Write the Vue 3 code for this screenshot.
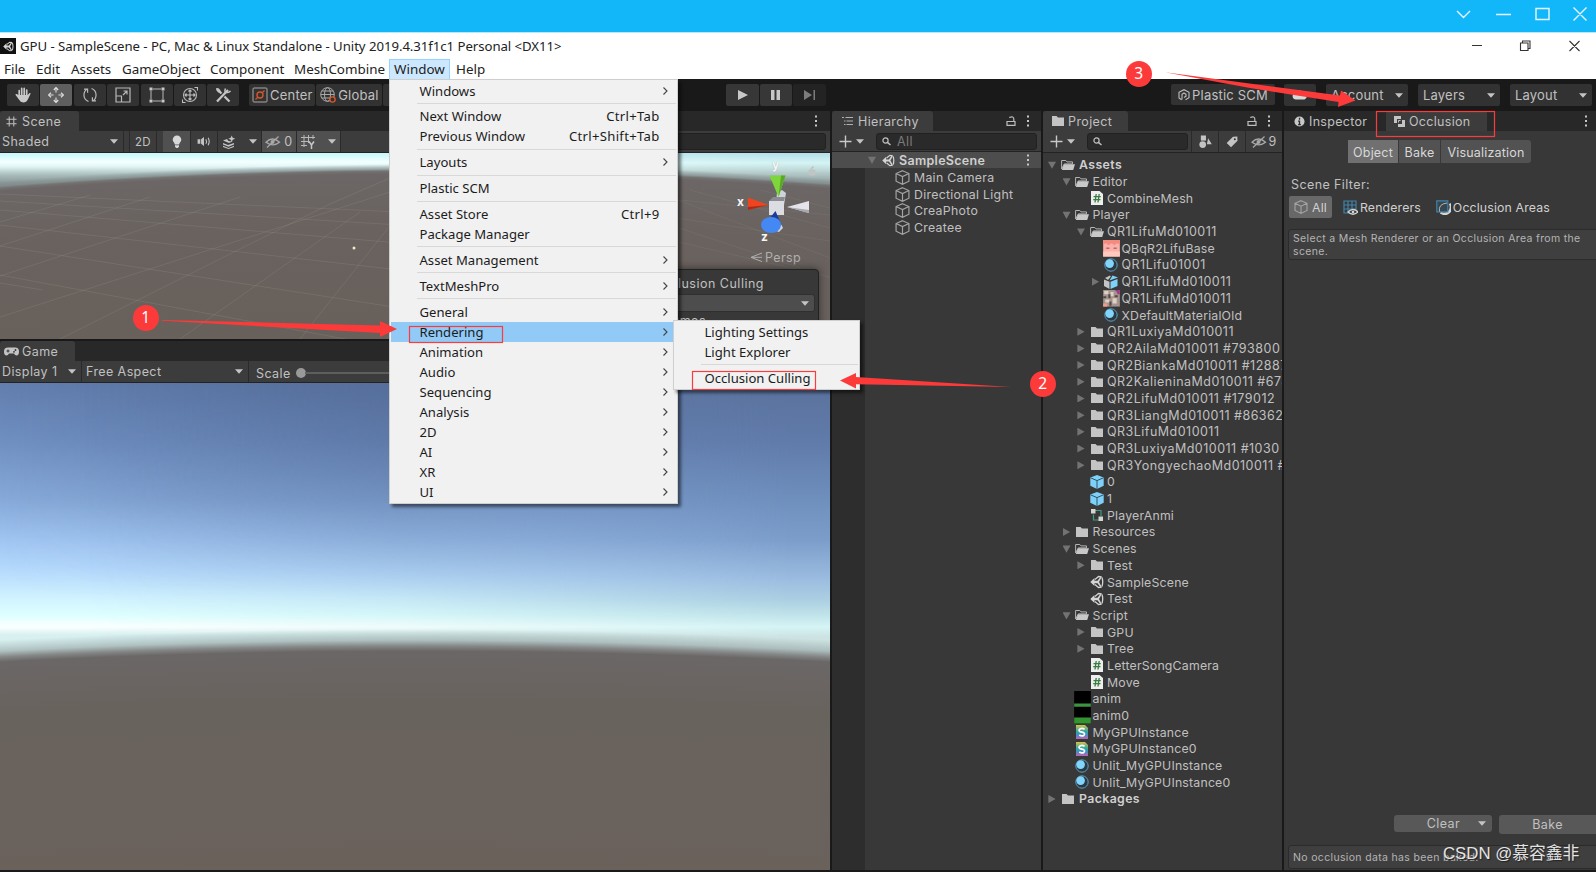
<script setup>
import { ref } from "vue";

const menus = ["File", "Edit", "Assets", "GameObject", "Component", "MeshCombine", "Window", "Help"];
const activeMenu = ref("Window");

const tools = ["hand", "move", "rotate", "scale", "rect", "transform", "custom"];
const activeTool = ref("move");

// "-" is a separator line
const windowMenu = [
  { text: "Windows", sub: true },
  "-",
  { text: "Next Window", key: "Ctrl+Tab" },
  { text: "Previous Window", key: "Ctrl+Shift+Tab" },
  "-",
  { text: "Layouts", sub: true },
  "-",
  { text: "Plastic SCM" },
  "-",
  { text: "Asset Store", key: "Ctrl+9" },
  { text: "Package Manager" },
  "-",
  { text: "Asset Management", sub: true },
  "-",
  { text: "TextMeshPro", sub: true },
  "-",
  { text: "General", sub: true },
  { text: "Rendering", sub: true, on: true },
  { text: "Animation", sub: true },
  { text: "Audio", sub: true },
  { text: "Sequencing", sub: true },
  { text: "Analysis", sub: true },
  { text: "2D", sub: true },
  { text: "AI", sub: true },
  { text: "XR", sub: true },
  { text: "UI", sub: true },
];

const renderingMenu = [{ text: "Lighting Settings" }, { text: "Light Explorer" }, "-", { text: "Occlusion Culling" }];

const objects = ["Main Camera", "Directional Light", "CreaPhoto", "Createe"];

// code: names with long model numbers
const assets = [
  { d: 0, arrow: "down", icon: "open", text: "Assets", bold: true },
  { d: 1, arrow: "down", icon: "open", text: "Editor" },
  { d: 2, icon: "script", text: "CombineMesh" },
  { d: 1, arrow: "down", icon: "open", text: "Player" },
  { d: 2, arrow: "down", icon: "open", text: "QR1LifuMd010011", code: true },
  { d: 3, icon: "face", text: "QBqR2LifuBase" },
  { d: 3, icon: "material", text: "QR1Lifu01001", code: true },
  { d: 3, arrow: "right", icon: "model", text: "QR1LifuMd010011", code: true },
  { d: 3, icon: "texture", text: "QR1LifuMd010011", code: true },
  { d: 3, icon: "material", text: "XDefaultMaterialOld" },
  { d: 2, arrow: "right", icon: "folder", text: "QR1LuxiyaMd010011", code: true },
  { d: 2, arrow: "right", icon: "folder", text: "QR2AilaMd010011 #793800", code: true },
  { d: 2, arrow: "right", icon: "folder", text: "QR2BiankaMd010011 #12887", code: true },
  { d: 2, arrow: "right", icon: "folder", text: "QR2KalieninaMd010011 #678", code: true },
  { d: 2, arrow: "right", icon: "folder", text: "QR2LifuMd010011 #179012", code: true },
  { d: 2, arrow: "right", icon: "folder", text: "QR3LiangMd010011 #86362", code: true },
  { d: 2, arrow: "right", icon: "folder", text: "QR3LifuMd010011", code: true },
  { d: 2, arrow: "right", icon: "folder", text: "QR3LuxiyaMd010011 #1030", code: true },
  { d: 2, arrow: "right", icon: "folder", text: "QR3YongyechaoMd010011 #", code: true },
  { d: 2, icon: "prefab", text: "0" },
  { d: 2, icon: "prefab", text: "1" },
  { d: 2, icon: "animator", text: "PlayerAnmi" },
  { d: 1, arrow: "right", icon: "folder", text: "Resources" },
  { d: 1, arrow: "down", icon: "open", text: "Scenes" },
  { d: 2, arrow: "right", icon: "folder", text: "Test" },
  { d: 2, icon: "unity", text: "SampleScene" },
  { d: 2, icon: "unity", text: "Test" },
  { d: 1, arrow: "down", icon: "open", text: "Script" },
  { d: 2, arrow: "right", icon: "folder", text: "GPU" },
  { d: 2, arrow: "right", icon: "folder", text: "Tree" },
  { d: 2, icon: "script", text: "LetterSongCamera" },
  { d: 2, icon: "script", text: "Move" },
  { d: 1, icon: "anim", text: "anim" },
  { d: 1, icon: "anim0", text: "anim0" },
  { d: 1, icon: "shader", text: "MyGPUInstance" },
  { d: 1, icon: "shader", text: "MyGPUInstance0" },
  { d: 1, icon: "material", text: "Unlit_MyGPUInstance" },
  { d: 1, icon: "material", text: "Unlit_MyGPUInstance0" },
  { d: 0, arrow: "right", icon: "folder", text: "Packages", bold: true },
];
</script>

<template>
  <!-- icon set -->
  <svg class="defs" width="0" height="0">
    <linearGradient id="g-shader" x1="0" y1="0" x2="0" y2="1">
      <stop offset="0" stop-color="#d8c24a" />
      <stop offset="0.45" stop-color="#2fa9a0" />
      <stop offset="0.7" stop-color="#3f8fc4" />
      <stop offset="1" stop-color="#c85fb0" />
    </linearGradient>
    <symbol id="i-hand" viewBox="0 0 16 16">
      <path d="M4.2 9.5V3.6M6.7 8V1.4M9.2 8V1.4M11.7 9V3" stroke="#c8c8c8" stroke-width="1.7" stroke-linecap="round" />
      <path d="M3.4 8h9.2l2-2q1.2-.2 1 .8l-2.800 5.700q-1.200 2.900-4.500 2.900-3 0-4.200-2.600L.4 7.800q.1-1.200 1.300-.7z" fill="#c8c8c8" />
    </symbol>
    <symbol id="i-move" viewBox="0 0 16 16">
      <path d="M8 1v4.500M8 10.500V15M1 8h4.500M10.500 8H15" stroke="#dedede" fill="none" stroke-width="1.1" />
      <path d="M5.800 3L8 .5 10.200 3M5.800 13L8 15.500 10.200 13M3 5.800L.5 8 3 10.200M13 5.800L15.500 8 13 10.200" stroke="#dedede" fill="none" stroke-width="1.200" />
    </symbol>
    <symbol id="i-rotate" viewBox="0 0 16 16">
      <path d="M6.500 14.500C1 12.500.5 5.500 5 2M9.500 1.500c5.500 2 6 9 1.500 12.500M2 2.200h3.600v3.600M14 13.800h-3.600v-3.600" stroke="#b8b8b8" fill="none" stroke-width="1.200" />
    </symbol>
    <symbol id="i-scale" viewBox="0 0 16 16">
      <path d="M1 1h14v14H1zM1 9h5.500v6M8 8l4-4M8.500 4H12v3.500" stroke="#b8b8b8" fill="none" stroke-width="1.200" />
    </symbol>
    <symbol id="i-rect" viewBox="0 0 16 16">
      <path d="M4 2h8M4 14h8M2 4v8M14 4v8" stroke="#b8b8b8" stroke-width="1" />
      <path d="M.5.500h3v3h-3zM12.500.500h3v3h-3zM.5 12.500h3v3h-3zM12.500 12.500h3v3h-3z" fill="#c8c8c8" />
    </symbol>
    <symbol id="i-transform" viewBox="0 0 16 16">
      <circle cx="8" cy="8" r="6.500" fill="none" stroke="#b8b8b8" stroke-width="1.100" />
      <path d="M8 3v10M3 8h10M6.500 4.500L8 3l1.500 1.500M6.500 11.500L8 13l1.500-1.500M4.500 6.500L3 8l1.500 1.500M11.500 6.500L13 8l-1.500 1.500M12.500.500h3v3M3.500 15.500h-3v-3" stroke="#c0c0c0" fill="none" stroke-width="1.100" />
    </symbol>
    <symbol id="i-custom" viewBox="0 0 16 16">
      <path d="M2 14.500L13 3M9.500 9.500l5 5M2 2l4.500 4.500" stroke="#c4c4c4" stroke-width="2.300" fill="none" />
      <path d="M10.500 1.500q-1.500 3.500 1 4t4-1.500" stroke="#c4c4c4" stroke-width="1.500" fill="none" />
      <path d="M1 1l3 .6L6 4.500 4 6 1.800 4z" fill="#c4c4c4" />
    </symbol>
    <symbol id="i-center" viewBox="0 0 16 16">
      <rect x="1" y="1" width="14" height="14" rx="1" fill="none" stroke="#a8a8a8" />
      <circle cx="8" cy="8" r="3" fill="none" stroke="#d4572c" stroke-width="1.400" />
      <path d="M3.500 12.500l2-2M10.500 5.500l2-2" stroke="#d4572c" stroke-width="1.200" />
    </symbol>
    <symbol id="i-global" viewBox="0 0 16 16">
      <g fill="none" stroke="#a8a8a8">
        <circle cx="7.500" cy="7.500" r="6.800" />
        <ellipse cx="7.500" cy="7.500" rx="3" ry="6.800" />
        <path d="M.7 7.500h13.600M1.800 4h11.400M1.800 11h11.400" />
      </g>
      <circle cx="12.500" cy="12.500" r="2.600" fill="#323232" stroke="#d4572c" stroke-width="1.400" />
    </symbol>
    <symbol id="i-hash" viewBox="0 0 12 12">
      <path d="M3.500.500v11M8.500.500v11M.5 3.500h11M.5 8.500h11" stroke="#c0c0c0" stroke-width="1.100" />
    </symbol>
    <symbol id="i-bulb" viewBox="0 0 12 14">
      <path d="M6 .5a4.300 4.300 0 0 1 4.300 4.300c0 2-1.800 2.700-2.100 4.600H3.800C3.500 7.500 1.700 6.800 1.700 4.800A4.300 4.300 0 0 1 6 .5zM4 10.300h4v1.500L6.800 13H5.200L4 11.800z" fill="#d8d8d8" />
    </symbol>
    <symbol id="i-sound" viewBox="0 0 14 12">
      <path d="M0 3.500h3v5H0zM3.800 3.500L7 1v10L3.800 8.500z" fill="#c4c4c4" />
      <path d="M9 3.500q1.500 2.500 0 5M11.500 2q2.300 4 0 8" stroke="#c4c4c4" fill="none" stroke-width="1.200" />
    </symbol>
    <symbol id="i-fx" viewBox="0 0 14 14">
      <path d="M1 5.500l4-1.500 1.500 2 4 .5L7 8zM1 8l5 2 6-2v1.500L6.500 11.800 1 9.500zM1 10.800l5.500 2.200 5.500-2.300V12l-5.500 2L1 12z" fill="#c4c4c4" />
      <path d="M9.700.500l1 2.300 2.600 1-2.600 1-1 2.400-1-2.400-2.500-1 2.500-1z" fill="#c4c4c4" />
    </symbol>
    <symbol id="i-eye" viewBox="0 0 16 12">
      <path d="M1 6.300q6.500-6.500 13.500 0Q8 11.500 1 6.300z" fill="none" stroke="#a8a8a8" stroke-width="1.300" />
      <circle cx="7.500" cy="6" r="2" fill="#a8a8a8" />
      <path d="M2 11.500L13.500.500" stroke="#a8a8a8" stroke-width="1.200" />
    </symbol>
    <symbol id="i-grid" viewBox="0 0 14 14">
      <path d="M3 0v12M7.500 0v8M12 0v4M0 2.500h14M0 6.500h7M0 10.500h6" stroke="#b8b8b8" />
      <path d="M8 6.500l2.500 3.500L13 6.500M10.500 10v4" stroke="#c8c8c8" stroke-width="1.500" fill="none" />
    </symbol>
    <symbol id="i-pad" viewBox="0 0 15 9">
      <path d="M4 .5h7q4 0 4 4t-2.500 4q-1.500 0-2.500-2H5q-1 2-2.500 2Q0 8.500 0 4.500t4-4z" fill="#c4c4c4" />
      <path d="M2.500 4h3M4 2.500v3" stroke="#333" />
      <circle cx="11.500" cy="3" r=".9" fill="#333" />
      <circle cx="10" cy="4.800" r=".9" fill="#333" />
    </symbol>
    <symbol id="i-list" viewBox="0 0 11 10">
      <path d="M0 1.500h2M3.500 1.500H11M2 5h1.500M4.500 5H11M2 8.500h1.500M4.500 8.500H11" stroke="#b0b0b0" />
    </symbol>
    <symbol id="i-lock" viewBox="0 0 10 10">
      <path d="M1 5.500h8v3.800H1zM3.200 1.500Q7.800-.2 7.800 3v2.500" fill="none" stroke="#bcbcbc" stroke-width="1.200" />
    </symbol>
    <symbol id="i-kebab" viewBox="0 0 4 12">
      <path d="M1 .6h2v2H1zM1 5h2v2H1zM1 9.400h2v2H1z" fill="#c8c8c8" />
    </symbol>
    <symbol id="i-plus" viewBox="0 0 13 13">
      <path d="M6.500.500v12M.5 6.500h12" stroke="#c8c8c8" stroke-width="1.400" />
    </symbol>
    <symbol id="i-caret" viewBox="0 0 8 5">
      <path d="M0 .2h8L4 4.800z" fill="#c4c4c4" />
    </symbol>
    <symbol id="i-search" viewBox="0 0 9 9">
      <circle cx="3.500" cy="3.500" r="2.600" fill="none" stroke="#c0c0c0" stroke-width="1.200" />
      <path d="M5.400 5.400L8.500 8" stroke="#c0c0c0" stroke-width="1.400" />
    </symbol>
    <symbol id="i-shapes" viewBox="0 0 14 14">
      <path d="M2 0h5.500v5.500H2z" fill="#c4c4c4" />
      <circle cx="4" cy="9.800" r="3.600" fill="#c4c4c4" />
      <path d="M8.500 9.500L9.800 3l4 6.500z" fill="#c4c4c4" />
    </symbol>
    <symbol id="i-tag" viewBox="0 0 12 12">
      <path d="M7 .8l4.300-.3.200 4.300L5 11.300.7 7z" fill="#c4c4c4" />
      <circle cx="8.800" cy="3.200" r="1" fill="#333" />
    </symbol>
    <symbol id="i-info" viewBox="0 0 12 12">
      <circle cx="6" cy="6" r="5.500" fill="#c8c8c8" />
      <path d="M6 2v2M6 5v4.500M4.500 5.500H6M4.500 9.300h3" stroke="#2a2a2a" stroke-width="1.400" />
    </symbol>
    <symbol id="i-occ" viewBox="0 0 11 11">
      <path d="M0 0h7v3H3v4H0z" fill="#c4c4c4" />
      <path d="M4 8h4V4h3v7H4z" fill="#c4c4c4" />
      <path d="M4.500 6.500v-2h2" stroke="#c4c4c4" fill="none" />
    </symbol>
    <symbol id="i-plastic" viewBox="0 0 12 12">
      <path d="M3.500 10.800L1 9V3.300L6 .7l5 2.600v5.500L7.500 10.800M4 10.500V5.200L6 4l2 1.200v2L6 8.500" fill="none" stroke="#c0c0c0" stroke-width="1.100" />
    </symbol>
    <symbol id="i-cloud" viewBox="0 0 16 10">
      <path d="M4 9.500a3.400 3.400 0 0 1 0-6.800A4.400 4.400 0 0 1 12 3.600a3 3 0 0 1 .5 5.900z" fill="#d8d8d8" />
    </symbol>
    <symbol id="i-cube" viewBox="0 0 14 14">
      <path d="M7 .7l6 2.600v7.200L7 13.400 1 10.500V3.300zM1 3.300l6 2.900 6-2.900M7 6.200v7.200" fill="none" stroke="#a4a4a4" stroke-width="1.100" />
    </symbol>
    <symbol id="i-unity" viewBox="0 0 14 14">
      <path d="M5 4.400L8.500 1.500l3.200.4M5 9.600l3.500 2.900 3.200-.4M12 2.500q1.400 4.500 0 9" fill="none" stroke="#d4d4d4" stroke-width="1.300" />
      <path d="M.3 7L4.500 3v2.800h3L10.300 2l1.200.6L9 7l2.500 4.400-1.200.6-2.800-3.800h-3V11z" fill="#d4d4d4" />
    </symbol>
    <symbol id="i-open" viewBox="0 0 14 12">
      <path d="M.6 10V1.500h4.200L6 2.900h5.500v2H3.300z" fill="#383838" stroke="#b4b4b4" stroke-width="1" />
      <path d="M3 5.300h11L12.200 11H.8z" fill="#c8c8c8" />
    </symbol>
    <symbol id="i-folder" viewBox="0 0 14 12">
      <path d="M1 1h4.500l1.500 1.500h6V11H1z" fill="#c4c4c4" />
    </symbol>
    <symbol id="i-script" viewBox="0 0 14 14">
      <path d="M1 0h8.500L13 3v11H1z" fill="#eeeeee" />
      <path d="M6.200 3L5 11.500M9.200 3L8 11.500M3.500 5.700h7.300M3.200 8.700h7.300" stroke="#3b7c42" stroke-width="1.300" />
    </symbol>
    <symbol id="i-material" viewBox="0 0 14 14">
      <circle cx="7" cy="7" r="6.200" fill="#2c3942" stroke="#5b9fc2" />
      <circle cx="5.600" cy="5.600" r="4.300" fill="#81d4fa" />
    </symbol>
    <symbol id="i-prefab" viewBox="0 0 14 14">
      <path d="M7 0l6.700 2.500v8.300L7 14 .3 10.800V2.500z" fill="#7ed0f8" />
      <path d="M.5 2.800L7 5.600l6.500-2.800M7 5.600V14" fill="none" stroke="#2f5468" />
    </symbol>
    <symbol id="i-model" viewBox="0 0 14 14">
      <path d="M0 4.500l5.500 2.200V14L0 11z" fill="#c4c4c4" />
      <path d="M6.500 6.700L13.500 4v7l-7 3z" fill="#7ed0f8" />
      <path d="M1 3L6 .5l.8 1L4 5z" fill="#c4c4c4" />
      <path d="M5.500 5.500L8.500.500 14 2.500z" fill="#7ed0f8" />
    </symbol>
    <symbol id="i-face" viewBox="0 0 16 16">
      <path d="M0 0h16v16H0z" fill="#fbb0a8" />
      <path d="M0 0h16v4l-3-1-2 2-3-2-3 2-2-2-3 1z" fill="#f58a80" />
      <path d="M3 8h3M10 8h3" stroke="#c0607c" stroke-width="1.400" />
      <path d="M0 11h16v5H0z" fill="#fcc8c0" />
    </symbol>
    <symbol id="i-texture" viewBox="0 0 16 16">
      <path d="M0 0h16v16H0z" fill="#a4958c" />
      <path d="M1 1h4v3H1zM7 2h3v4H7zM2 9h4v3H2zM9 8h4v5H9z" fill="#dccfc4" />
      <path d="M5 4h2v4H5zM0 6h3v2H0zM11 5h3v2h-3zM6 11h2v4H6z" fill="#55484a" />
      <path d="M11 0h5v4h-2l-1-2z" fill="#a03c8c" />
      <path d="M0 13h4v3H0z" fill="#f29a8c" />
    </symbol>
    <symbol id="i-animator" viewBox="0 0 14 14">
      <path d="M3.500 6.500V12h6M5 2.500h6V8" fill="none" stroke="#3f9c80" stroke-width="1.200" />
      <path d="M1 1h4.500v4.500H1zM8.500 8.500H13V13H8.500z" fill="#d4d4d4" />
    </symbol>
    <symbol id="i-shader" viewBox="0 0 14 14">
      <path d="M1 0h9l3 3v11H1z" fill="url(#g-shader)" />
      <path d="M9.600 4.200Q7 2.800 5 4t0 2.600l3.600 1q1.800 1.200.2 2.800-2 1.200-4.600-.4" fill="none" stroke="#fff" stroke-width="1.700" />
    </symbol>
    <symbol id="i-anim" viewBox="0 0 16 16">
      <path d="M0 0h16v16H0z" fill="#000" />
      <path d="M0 12h16v3H0z" fill="#3c9440" />
    </symbol>
    <symbol id="i-anim0" viewBox="0 0 16 16">
      <path d="M0 0h16v16H0z" fill="#000" />
      <path d="M0 10h16v6H0z" fill="#339430" />
    </symbol>
    <symbol id="i-renderers" viewBox="0 0 15 15">
      <path d="M1 1h12v12H1zM5 1v12M9 1v12M1 5h12M1 9h12" fill="none" stroke="#3f84ab" stroke-width="1.200" />
      <path d="M5 12q5-5 10 0-5 4.500-10 0z" fill="#383838" stroke="#d4d4d4" stroke-width="1.300" />
      <circle cx="10" cy="12" r="1.300" fill="#d4d4d4" />
    </symbol>
    <symbol id="i-areas" viewBox="0 0 15 15">
      <path d="M4.500 12.500q5 3 8.500-.5t1-8.500" fill="none" stroke="#d4d4d4" stroke-width="2.600" />
      <path d="M.8.800h11v11H.8z" fill="#38464e" stroke="#3f84ab" stroke-width="1.200" />
      <path d="M3.500 11.500Q2 4 11 3" fill="none" stroke="#b4b4b4" />
    </symbol>
  </svg>

  <div class="screen">
    <!-- remote desktop bar -->
    <div class="remote">
      <svg width="132" height="16" viewBox="0 0 132 16" fill="none" stroke="#e8f8ff" stroke-width="1.400">
        <path d="M1 5l6.500 6.500L14 5M40 8.500h15M80 2.500h13v11h-13zM117.500 1.500l13 13M130.500 1.500l-13 13" />
      </svg>
    </div>

    <div class="title">
      <span class="logo"><svg width="11" height="11"><use href="#i-unity" /></svg></span>
      <span class="caption">GPU - SampleScene - PC, Mac &amp; Linux Standalone - Unity 2019.4.31f1c1 Personal &lt;DX11&gt;</span>
      <svg class="winbtns" width="110" height="12" viewBox="0 0 110 12" fill="none" stroke="#333" stroke-width="1.100">
        <path d="M1 5.500h10M49.500 3h7.500v7.500h-7.500zM51.500 3V1h7.500v7.500h-2M98.500 1l10 10M108.500 1l-10 10" />
      </svg>
    </div>

    <div class="menubar">
      <span v-for="m in menus" :key="m" :class="['m-' + m.toLowerCase(), { active: m === activeMenu }]">{{ m }}</span>
    </div>

    <div class="toolbar">
      <div class="tools">
        <button v-for="t in tools" :key="t" :class="{ on: t === activeTool }" @click="activeTool = t">
          <svg width="16" height="16"><use :href="'#i-' + t" /></svg>
        </button>
      </div>
      <div class="pivots">
        <button><svg width="16" height="16"><use href="#i-center" /></svg>Center</button>
        <button><svg width="16" height="16"><use href="#i-global" /></svg>Global</button>
        <button></button>
      </div>
      <div class="play">
        <button><svg width="10" height="12"><path d="M0 1l10 5-10 5z" fill="#c8c8c8" /></svg></button>
        <button><svg width="10" height="12"><path d="M0 1h3.500v10H0zM5.500 1H9v10H5.500z" fill="#c8c8c8" /></svg></button>
        <button class="dim"><svg width="12" height="12"><path d="M0 1l8 5-8 5zM9.500 1H11v10H9.500z" fill="#7c7c7c" /></svg></button>
      </div>
      <div class="account">
        <button class="plastic"><svg width="12" height="12"><use href="#i-plastic" /></svg>Plastic SCM</button>
        <button class="cloud"><svg width="16" height="10"><use href="#i-cloud" /></svg></button>
        <button class="drop">Account<svg width="8" height="5"><use href="#i-caret" /></svg></button>
        <button class="drop">Layers<svg width="8" height="5"><use href="#i-caret" /></svg></button>
        <button class="drop">Layout<svg width="8" height="5"><use href="#i-caret" /></svg></button>
      </div>
    </div>

    <div class="work">
      <div class="views">
        <section class="scene">
          <div class="tabs">
            <div class="tab"><svg width="11" height="11"><use href="#i-hash" /></svg>Scene</div>
            <svg class="kebab" width="4" height="12"><use href="#i-kebab" /></svg>
          </div>
          <div class="bar">
            <span class="shaded">Shaded<svg width="8" height="5"><use href="#i-caret" /></svg></span>
            <span class="cell two-d">2D</span>
            <span class="cell lit"><svg width="12" height="14"><use href="#i-bulb" /></svg></span>
            <span class="cell snd"><svg width="14" height="11"><use href="#i-sound" /></svg></span>
            <span class="cell fx"><svg width="14" height="14"><use href="#i-fx" /></svg><svg width="8" height="5"><use href="#i-caret" /></svg></span>
            <span class="cell hid"><svg width="16" height="12"><use href="#i-eye" /></svg>0</span>
            <span class="cell grd"><svg width="14" height="14"><use href="#i-grid" /></svg><svg width="8" height="5"><use href="#i-caret" /></svg></span>
            <span class="search scene-search"></span>
          </div>
          <div class="scene-view">
            <div class="sky2"></div>
            <div class="ground"></div>
            <svg class="lines" width="830" height="186" viewBox="0 153 830 186">
              <g stroke="#9a9590" stroke-opacity="0.24" fill="none">
                <path d="M0 275L345 339M43 290L0 283M0 246L400 308M0 225L400 270M0 210L400 243M0 201L400 225M0 194L400 212" />
                <path d="M0 317L390 192M60 339L330 204 390 178M180 339L360 212M300 339L388 228M0 276L240 197M0 246L150 197M0 222L90 195" />
                <path d="M670 199L830 215M670 217L830 241M670 240L830 277M670 197L830 258M670 225L800 268M760 190L830 208M690 190L830 228" stroke-opacity="0.16" />
              </g>
              <circle cx="354" cy="248" r="1.500" fill="#f0e8c8" />
            </svg>
            <svg class="gizmo" width="90" height="110" viewBox="735 158 90 110">
              <path d="M777 192l5-2 4 3-2 12h-8z" fill="#cfd3da" />
              <path d="M769 201l4-4h12l-1 4z" fill="#8a8c92" />
              <path d="M769 201h15v14h-15z" fill="#dcdde2" />
              <path d="M769.500 175.500h16L778.500 197z" fill="#7fd63c" />
              <path d="M781 175.500h4.500L778.500 197z" fill="#5aa828" />
              <path d="M768.500 205L748 197.500v12.500z" fill="#ee4420" />
              <path d="M768.500 205L748 207v3z" fill="#a82c14" />
              <path d="M787 207l22-6v12z" fill="#e4e4ea" />
              <path d="M787 207l22 3v3z" fill="#a8a8b0" />
              <path d="M779 220l4 8-4 4-6-2z" fill="#cfd3e0" />
              <path d="M775.500 211l6 14-14-4z" fill="#1c3a9c" />
              <ellipse cx="771" cy="225" rx="10" ry="8" fill="#4488f4" />
              <path d="M809 170h6v5h-6zM811 170q0-4 3-3" fill="#bfc4c4" stroke="#bfc4c4" />
              <path d="M762 253l-11 4.300 11 4.300M762 257.300h-10" fill="none" stroke="#aeb0b0" />
            </svg>
            <b class="axis ax-y">y</b>
            <b class="axis ax-x">x</b>
            <b class="axis ax-z">z</b>
            <span class="persp">Persp</span>
            <div class="overlay">
              <p>Occlusion Culling</p>
              <div class="select"><svg width="8" height="5"><use href="#i-caret" /></svg></div>
              <p class="vol">View Volumes</p>
            </div>
          </div>
        </section>

        <section class="game">
          <div class="tabs">
            <div class="tab"><svg width="15" height="9"><use href="#i-pad" /></svg>Game</div>
          </div>
          <div class="bar">
            <span class="shaded display">Display 1<svg width="8" height="5"><use href="#i-caret" /></svg></span>
            <span class="shaded aspect">Free Aspect<svg width="8" height="5"><use href="#i-caret" /></svg></span>
            <span class="scale">Scale<i></i></span>
          </div>
          <div class="game-view">
            <div class="sky2"></div>
            <div class="ground"></div>
          </div>
        </section>
      </div>

      <section class="hierarchy">
        <div class="tabs">
          <div class="tab"><svg width="11" height="10"><use href="#i-list" /></svg>Hierarchy</div>
          <svg class="lock" width="10" height="10"><use href="#i-lock" /></svg>
          <svg class="kebab" width="4" height="12"><use href="#i-kebab" /></svg>
        </div>
        <div class="bar">
          <svg class="plus" width="13" height="13"><use href="#i-plus" /></svg>
          <svg width="8" height="5"><use href="#i-caret" /></svg>
          <span class="search"><svg width="9" height="9"><use href="#i-search" /></svg><em>All</em></span>
        </div>
        <div class="scene-row">
          <i class="down"></i>
          <svg width="13" height="13"><use href="#i-unity" /></svg>
          <b>SampleScene</b>
          <svg class="kebab" width="4" height="12"><use href="#i-kebab" /></svg>
        </div>
        <div class="objects">
          <div v-for="o in objects" :key="o" class="object">
            <svg width="15" height="15"><use href="#i-cube" /></svg>{{ o }}
          </div>
        </div>
      </section>

      <section class="project">
        <div class="tabs">
          <div class="tab"><svg width="14" height="12"><use href="#i-folder" /></svg>Project</div>
          <svg class="lock" width="10" height="10"><use href="#i-lock" /></svg>
          <svg class="kebab" width="4" height="12"><use href="#i-kebab" /></svg>
        </div>
        <div class="bar">
          <svg class="plus" width="13" height="13"><use href="#i-plus" /></svg>
          <svg width="8" height="5"><use href="#i-caret" /></svg>
          <span class="search"><svg width="9" height="9"><use href="#i-search" /></svg></span>
          <span class="pcell"><svg width="13" height="14"><use href="#i-shapes" /></svg></span>
          <span class="pcell"><svg width="12" height="12"><use href="#i-tag" /></svg></span>
          <span class="pcell last"><svg width="16" height="12"><use href="#i-eye" /></svg>9</span>
        </div>
        <div class="tree">
          <div v-for="(a, i) in assets" :key="i" :class="['row', 'd' + a.d, { bold: a.bold, code: a.code }]">
            <i :class="a.arrow"></i>
            <svg :class="a.icon"><use :href="'#i-' + a.icon" /></svg>
            <span>{{ a.text }}</span>
          </div>
        </div>
      </section>

      <section class="inspector">
        <div class="tabs">
          <div class="tab off"><svg width="11" height="11"><use href="#i-info" /></svg>Inspector</div>
          <div class="tab occ"><svg width="11" height="11"><use href="#i-occ" /></svg>Occlusion</div>
          <svg class="kebab" width="4" height="12"><use href="#i-kebab" /></svg>
        </div>
        <div class="modes">
          <button class="on">Object</button>
          <button>Bake</button>
          <button>Visualization</button>
        </div>
        <p class="filter-label">Scene Filter:</p>
        <div class="filters">
          <button class="on"><svg width="14" height="14"><use href="#i-cube" /></svg>All</button>
          <button class="rend"><svg width="15" height="15"><use href="#i-renderers" /></svg>Renderers</button>
          <button class="areas"><svg width="15" height="15"><use href="#i-areas" /></svg>Occlusion Areas</button>
        </div>
        <div class="help">Select a Mesh Renderer or an Occlusion Area from the scene.</div>
        <div class="actions">
          <button class="clear">Clear<svg width="8" height="5"><use href="#i-caret" /></svg></button>
          <button class="bake">Bake</button>
        </div>
        <div class="status">No occlusion data has been baked.</div>
      </section>
    </div>

    <!-- opened menus -->
    <div class="popup main">
      <template v-for="(it, i) in windowMenu" :key="i">
        <hr v-if="it === '-'" />
        <div v-else :class="['item', { on: it.on }]">
          <span>{{ it.text }}</span>
          <span v-if="it.key" class="key">{{ it.key }}</span>
          <svg v-if="it.sub" width="5" height="8" viewBox="0 0 5 8"><path d="M.5.500L4 4 .5 7.500" fill="none" stroke="#444" stroke-width="1.100" /></svg>
        </div>
      </template>
    </div>
    <div class="popup sub">
      <template v-for="(it, i) in renderingMenu" :key="i">
        <hr v-if="it === '-'" />
        <div v-else class="item"><span>{{ it.text }}</span></div>
      </template>
    </div>

    <!-- tutorial marks -->
    <svg class="marks" width="1596" height="872">
      <g fill="none" stroke="#f93d3d" stroke-width="1.200">
        <rect x="409.500" y="326.500" width="93" height="16" />
        <rect x="692.500" y="371.500" width="123" height="18" />
        <rect x="1376.500" y="111.500" width="118" height="25" />
      </g>
      <g fill="#fc3a3a">
        <path d="M162 320L380 325.500V321L397 329 380 337V333L162 320.800z" />
        <path d="M1011 387L856 384.300V388.500L840 380.500 856 373V377z" />
        <path d="M1165 72.300L1340 95.500 1341 90.500 1355.500 100.500 1338 107 1338.500 102 1250 88z" />
        <circle cx="146" cy="318" r="13" />
        <circle cx="1043" cy="384" r="13" />
        <circle cx="1139" cy="74" r="13" />
      </g>
    </svg>
    <span class="num n1">1</span>
    <span class="num n2">2</span>
    <span class="num n3">3</span>
    <span class="watermark">CSDN @慕容鑫非</span>
  </div>
</template>

<style>
body {
  background: #191919;
  overflow: hidden;
}
</style>

<style scoped>
* {
  box-sizing: border-box;
}

svg {
  flex: none;
  display: block;
}

.defs {
  position: absolute;
}

p {
  margin: 0;
}

button {
  border: none;
  padding: 0;
  margin: 0;
  font: inherit;
  color: inherit;
  letter-spacing: inherit;
  white-space: nowrap;
}

.screen {
  position: relative;
  width: 1596px;
  height: 872px;
  display: flex;
  flex-direction: column;
  overflow: hidden;
  background: #191919;
  color: #c0c0c0;
  font: 12.5px Inter, "Liberation Sans", sans-serif;
  letter-spacing: 0.4px;
}

/* window chrome */
.remote {
  height: 32px;
  background: #12b7f9;
  display: flex;
  justify-content: flex-end;
  padding: 6px 8px 0 0;
}

.title {
  height: 27px;
  background: #fff;
  border-top: 1px solid #b8e8fc;
  display: flex;
  align-items: center;
  color: #222;
  font: 13.2px "Noto Sans", sans-serif;
  letter-spacing: -0.05px;
}

.logo {
  width: 16px;
  height: 16px;
  background: #111;
  display: flex;
  align-items: center;
  justify-content: center;
}

.caption {
  margin-left: 4px;
  padding-bottom: 1px;
  white-space: nowrap;
}

.winbtns {
  margin-left: auto;
  margin-right: 15px;
}

.menubar {
  height: 20px;
  background: #fff;
  display: flex;
  color: #222;
  font: 13.4px/20px "Noto Sans", sans-serif;
  letter-spacing: 0;
}

.menubar span {
  padding-left: 4px;
}

.m-file { width: 32px; }
.m-edit { width: 35px; }
.m-assets { width: 51px; }
.m-gameobject { width: 88px; }
.m-component { width: 84px; }
.m-meshcombine { width: 99px; }
.m-window { width: 61px; }
.menubar .m-window { padding-left: 4px; }
.menubar .m-help { padding-left: 6px; }

.menubar .active {
  background: #cce8ff;
  border: 1px solid #99d1ff;
  border-bottom: none;
  line-height: 18px;
}

/* toolbar */
.toolbar {
  height: 32px;
  background: #191919;
  display: flex;
  padding: 5px 4px 0 7px;
  font-size: 13px;
  letter-spacing: 0.2px;
}

.toolbar button {
  height: 22px;
  background: #323232;
  border-radius: 2px;
  display: flex;
  align-items: center;
  justify-content: center;
}

.tools,
.pivots,
.play,
.account {
  display: flex;
}

.tools {
  gap: 1.4px;
}

.tools button {
  width: 32px;
}

.tools button.on {
  background: #5f5f5f;
}

.pivots {
  margin-left: 10px;
  gap: 1px;
}

.pivots button {
  width: 66px;
  gap: 2px;
}

.play {
  margin-left: 277px;
  gap: 1px;
}

.play button {
  width: 32.5px;
  background: #373737;
}

.play button.dim {
  background: #232323;
}

.account {
  margin-left: auto;
  gap: 10px;
}

.account .plastic {
  width: 104px;
  height: 21px;
  gap: 2px;
  margin-right: -1px;
}

.account .cloud {
  width: 32px;
}

.account .drop {
  width: 82px;
  padding: 0 5px;
  justify-content: space-between;
}

/* shared panel parts */
.work {
  flex: 1;
  display: flex;
  gap: 2px;
  padding-bottom: 2px;
}

section {
  display: flex;
  flex-direction: column;
  background: #383838;
}

.tabs {
  height: 20px;
  flex: none;
  background: #282828;
  display: flex;
  align-items: center;
}

.tab {
  height: 20px;
  background: #3c3c3c;
  border-radius: 3px 3px 0 0;
  display: flex;
  align-items: center;
  gap: 5px;
}

.bar {
  height: 22px;
  flex: none;
  background: #3c3c3c;
  border-bottom: 1px solid #232323;
  display: flex;
  align-items: center;
}

.tabs .kebab {
  margin-left: auto;
}

.lock {
  margin-left: auto;
}

.tabs .lock + .kebab {
  margin-left: 10px;
}

.search {
  background: #2a2a2a;
  border: 1px solid #212121;
  border-radius: 3px;
  height: 17px;
  display: flex;
  align-items: center;
  padding-left: 5px;
}

/* scene */
.views {
  width: 830px;
  display: flex;
  flex-direction: column;
}

.scene .tab {
  width: 79px;
  padding-left: 6px;
  gap: 5px;
}

.scene .kebab {
  margin-right: 12px;
}

.shaded {
  display: flex;
  align-items: center;
  justify-content: space-between;
  width: 124px;
  height: 21px;
  padding: 0 5px 0 2px;
  border-right: 1px solid #2a2a2a;
}

.cell {
  height: 21px;
  display: flex;
  align-items: center;
  justify-content: center;
  border-right: 1px solid #2a2a2a;
}

.two-d {
  width: 28px;
  margin-left: 5px;
  font-size: 11.5px;
  border-left: 1px solid #2a2a2a;
}

.lit {
  width: 28px;
  margin-left: 6px;
  background: #505050;
}

.snd {
  width: 27px;
}

.fx {
  width: 44px;
  gap: 13px;
}

.hid {
  width: 35px;
  gap: 3px;
  background: #505050;
}

.grd {
  width: 44px;
  gap: 13px;
  background: #505050;
}

.scene-search {
  margin-left: auto;
  margin-right: 4px;
  width: 240px;
}

.scene-view {
  position: relative;
  height: 186px;
  overflow: hidden;
  background: linear-gradient(#c4f8fb, #f4ffff 9px, #e4f8f8 13px, #a8bcbc 22px, #808a8a 33px);
}

.sky2,
.ground {
  position: absolute;
  inset: 0;
}

.scene-view .sky2 {
  background: linear-gradient(#b4dde8, #d4f4f4 10px, #bcd4d4 18px, #849090 33px);
  mask-image: linear-gradient(to right, transparent 45%, #000 95%);
}

.scene-view .ground {
  background: radial-gradient(circle at 430px 5418px, #68605b 5230px, #69625e 5340px, #6c6666 5397px, #747272 5400px, rgba(130, 140, 140, 0.7) 5402px, rgba(190, 210, 210, 0) 5407px);
}

.lines,
.gizmo {
  position: absolute;
  left: 0;
  top: 0;
}

.gizmo {
  left: 735px;
  top: 5px;
}

.axis {
  position: absolute;
  color: #f6f6f6;
  font-size: 12px;
}

.ax-y { left: 772px; top: 4px; text-shadow: 0 0 1px #9aa; }
.ax-x { left: 737px; top: 41px; }
.ax-z { left: 761px; top: 76px; }

.persp {
  position: absolute;
  left: 765px;
  top: 97px;
  color: #b0b0ae;
}

.overlay {
  position: absolute;
  left: 560px;
  top: 116px;
  width: 259px;
  height: 80px;
  background: #383838;
  border: 1px solid #222;
  border-radius: 4px;
  box-shadow: 0 0 8px rgba(0, 0, 0, 0.5);
  text-align: right;
}

.overlay p {
  padding: 6px 54px 0 0;
  line-height: 16px;
  letter-spacing: 0.5px;
}

.overlay .select {
  height: 18px;
  margin: 2px 3px 0 5px;
  padding: 0 5px;
  background: #4d4d4d;
  border: 1px solid #303030;
  border-radius: 3px;
  display: flex;
  align-items: center;
  justify-content: flex-end;
}

.overlay .vol {
  padding: 1px 112px 0 0;
}

/* game */
.game {
  flex: 1;
  margin-top: 2px;
}

.game .tab {
  width: 75px;
  padding-left: 4px;
  gap: 3px;
}

.display {
  width: 82px;
}

.aspect {
  width: 167px;
  padding-left: 4px;
}

.scale {
  display: flex;
  align-items: center;
  gap: 5px;
  padding: 3px 0 0 7px;
}

.scale i {
  width: 10px;
  height: 10px;
  border-radius: 50%;
  background: #999;
}

.scale::after {
  content: "";
  width: 100px;
  height: 2px;
  margin-left: -6px;
  background: #5e5e5e;
}

.game-view {
  position: relative;
  flex: 1;
  overflow: hidden;
  background: linear-gradient(#627eae, #6f8fc1 57px, #86a9d9 117px, #a0c5f1 157px, #b5dafd 187px, #d2f4ff 217px, #deffff 232px, #fbffff 244px, #d8f0f0 252px);
}

.game-view .sky2 {
  background: linear-gradient(#5a729c, #607aa9 57px, #6f8fbd 117px, #7c9dca 157px, #9cbde0 197px, #accfe2 217px, #c0e3ea 232px, #d5f4f5 244px, #cde2e2 254px);
  mask-image: linear-gradient(to right, transparent 10%, rgba(0, 0, 0, 0.3) 48%, #000 95%);
}

/* darker patch in the middle of the upper sky */
.game-view::before {
  content: "";
  position: absolute;
  inset: 0;
  background: linear-gradient(to right, rgba(64, 84, 126, 0), rgba(64, 84, 126, 0.42) 48%, rgba(64, 84, 126, 0));
  mask-image: linear-gradient(#000, rgba(0, 0, 0, 0.75) 90px, transparent 215px);
}

.game-view .ground {
  background: radial-gradient(circle at 415px 8088px, #6a615b 7600px, #69635e 7770px, #6b6767 7820px, #858787 7825px, rgba(150, 165, 165, 0.6) 7831px, rgba(220, 240, 240, 0) 7842px);
}

/* hierarchy */
.hierarchy {
  width: 209px;
}

.hierarchy .tab {
  width: 101px;
  padding-left: 10px;
}

.hierarchy .bar {
  height: 21px;
}

.hierarchy .tabs .kebab,
.project .tabs .kebab {
  margin-right: 11px;
}

.plus {
  margin: 0 4px 0 7px;
}

.hierarchy .search {
  width: 161px;
  margin-left: 12px;
}

.search em {
  font-style: normal;
  color: #7a7a7a;
  margin-left: 6px;
}

.scene-row {
  height: 16px;
  background: #4d4d4d;
  display: flex;
  align-items: center;
  padding-left: 34px;
}

.scene-row b {
  margin-left: 4px;
  color: #d0d0d0;
  font-weight: 600;
  letter-spacing: 0.3px;
}

.scene-row svg:not(.kebab) {
  margin-left: 5px;
}

.scene-row .kebab {
  margin-left: auto;
  margin-right: 11px;
}

.objects {
  flex: 1;
  padding-top: 1px;
  background: linear-gradient(to right, #2d2d2d 33px, #383838 33px);
  font-size: 12.3px;
  letter-spacing: 0.3px;
}

.object {
  height: 16.7px;
  display: flex;
  align-items: center;
  gap: 4px;
  padding-left: 63px;
}

/* project */
.project {
  width: 239px;
}

.project .tab {
  width: 85px;
  padding-left: 8px;
  gap: 3px;
}

.project .search {
  width: 101px;
  margin-left: 12px;
}

.pcell {
  width: 27px;
  height: 21px;
  display: flex;
  align-items: center;
  justify-content: center;
  border-left: 1px solid #2a2a2a;
}

.project .search + .pcell {
  margin-left: 3px;
}

.pcell.last {
  flex: 1;
  gap: 1px;
}

.tree {
  padding-top: 3.500px;
  overflow: hidden;
  font-size: 12.3px;
  letter-spacing: 0.2px;
}

.row {
  height: 16.7px;
  display: flex;
  align-items: center;
  white-space: nowrap;
}

.code {
  font-size: 12.5px;
  letter-spacing: 0.48px;
}

.d0 { padding-left: 3px; }
.d1 { padding-left: 17.500px; }
.d2 { padding-left: 32px; }
.d3 { padding-left: 46.500px; }

.row i {
  width: 11px;
  flex: none;
}

i.down::before,
i.right::before {
  content: "";
  display: block;
  width: 8px;
  height: 8px;
  margin-left: 2px;
  background: #737373;
}

.scene-row i {
  width: 11px;
}

i.down::before {
  clip-path: polygon(0 10%, 100% 10%, 50% 100%);
}

i.right::before {
  clip-path: polygon(5% 0, 95% 50%, 5% 100%);
}

.row svg {
  width: 14px;
  height: 14px;
  margin: 0 3.500px 0 3.500px;
}

.row svg.folder,
.row svg.open {
  height: 12px;
}

.row svg.face,
.row svg.texture,
.row svg.anim,
.row svg.anim0 {
  width: 17px;
  height: 16.700px;
  margin: 0 2px 0 2px;
}

.d0.row svg {
  margin-right: 4.500px;
}

.bold {
  letter-spacing: 0.4px;
}

.bold span {
  font-weight: 600;
  color: #d0d0d0;
}

/* inspector */
.inspector {
  flex: 1;
}

.inspector .off {
  width: 102px;
  padding-left: 10px;
  background: none;
  gap: 4px;
  letter-spacing: 0.3px;
}

.inspector .occ {
  width: 101px;
  padding-left: 8px;
  gap: 4px;
  letter-spacing: 0.3px;
}

.inspector .tabs .kebab {
  margin-right: 8px;
}

.modes {
  display: flex;
  gap: 1px;
  margin: 9px 0 0 64px;
  color: #d8d8d8;
  letter-spacing: 0.2px;
}

.modes button {
  height: 23px;
  padding-top: 1px;
  background: #525252;
  width: 41px;
}

.modes button.on {
  width: 50px;
  background: #707070;
}

.modes button:last-child {
  width: 90px;
  border-radius: 0 3px 3px 0;
}

.filter-label {
  margin: 14px 0 0 7px;
  line-height: 16px;
}

.filters {
  display: flex;
  margin: 3px 0 0 5px;
  color: #d0d0d0;
  font-size: 12.3px;
  letter-spacing: 0.14px;
}

.filters button {
  height: 22px;
  background: none;
  display: flex;
  align-items: center;
  gap: 2px;
}

.filters .on {
  width: 43px;
  background: #686868;
  border-radius: 2px;
  justify-content: center;
  gap: 4px;
}

.filters .rend {
  margin-left: 11px;
}

.filters .areas {
  margin-left: 15px;
}

.help,
.status {
  margin: 11px -4px 0 4px;
  padding: 3px 10px 2px 4px;
  background: #3f3f3f;
  border: 1px solid #2b2b2b;
  border-radius: 3px;
  font-size: 10.5px;
  line-height: 12.600px;
  letter-spacing: 0.34px;
  color: #b4b4b4;
}

.help {
  height: 31px;
}

.actions {
  margin-top: auto;
  display: flex;
  justify-content: flex-end;
  align-items: flex-start;
  gap: 7px;
}

.actions button {
  background: #585858;
  border-radius: 3px 0 0 3px;
  height: 19px;
  width: 97px;
}

.actions .clear {
  display: flex;
  align-items: center;
  justify-content: flex-end;
  width: 98px;
  height: 17px;
  padding: 0 6px 0 0;
  gap: 18px;
  border-radius: 3px;
}

.status {
  height: 24px;
  margin-bottom: 1px;
  padding-top: 3px;
  line-height: 18px;
}

/* popup menus */
.popup {
  position: absolute;
  background: #f1f1f1;
  border: 1px solid #cfcfcf;
  box-shadow: 3px 3px 3px rgba(0, 0, 0, 0.5);
  color: #1c1c1c;
  font: 13.1px/20px "Noto Sans", sans-serif;
  letter-spacing: 0;
}

.main {
  left: 389px;
  top: 79px;
  width: 289px;
  height: 425px;
  padding: 0.500px 1px;
}

.sub {
  left: 673px;
  top: 320px;
  width: 187px;
  height: 70px;
  padding: 1px 1px;
}

.item {
  height: 20px;
  display: flex;
  align-items: center;
  padding-left: 28.500px;
  padding-right: 8px;
  white-space: nowrap;
}

.sub .item {
  padding-left: 29.500px;
}

.item.on {
  background: #91c9f7;
}

.item .key {
  margin-left: auto;
  margin-right: 8.500px;
  letter-spacing: 0.3px;
}

.item svg {
  margin-left: auto;
}

.popup hr {
  height: 1px;
  border: none;
  background: #d8d8d8;
  margin: 2.400px 0 2.500px 26px;
}

/* marks */
.marks {
  position: absolute;
  left: 0;
  top: 0;
}

.num {
  position: absolute;
  width: 26px;
  text-align: center;
  color: #fff;
  font: 15.5px/24px "Noto Sans", sans-serif;
}

.n1 { left: 133px; top: 305px; }
.n2 { left: 1030px; top: 371px; }
.n3 { left: 1126px; top: 61px; }

.watermark {
  position: absolute;
  left: 1443px;
  top: 841px;
  color: #e4e4e4;
  font: 16.8px/26px "Liberation Sans", "Noto Sans CJK SC", sans-serif;
  letter-spacing: 0;
  white-space: nowrap;
  text-shadow: 1px 1px 1px #222;
}
</style>
